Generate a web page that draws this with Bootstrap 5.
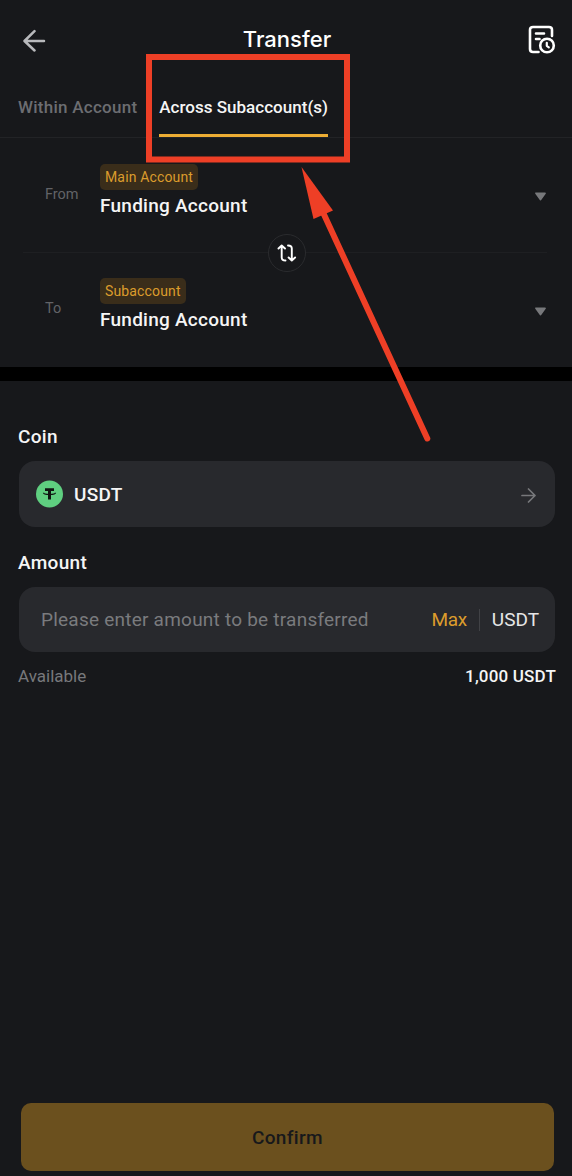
<!DOCTYPE html>
<html lang="en" data-bs-theme="dark">
<head>
<meta charset="utf-8">
<meta name="viewport" content="width=device-width, initial-scale=1">
<title>Transfer</title>
<link rel="stylesheet" href="https://cdn.jsdelivr.net/npm/bootstrap@5.3.0/dist/css/bootstrap.min.css">
<style>
  body { background: #17181b; color: #f5f5f5; font-family: Roboto, "Noto Sans", sans-serif; line-height: 1; }
  .screen { height: 1176px; }
  .screen span, .screen button, .screen h1, .screen label { white-space: nowrap; }
  svg { display: block; flex: none; }
  .top-bar { height: 80px; padding: 0 16px 0 22px; }
  .top-title { font: 500 22px/30px Inter, sans-serif; letter-spacing: 0; padding: 0 4px 2px 0; }
  .tab-bar { height: 58px; border-bottom: 1px solid #222326; padding-left: 18px; gap: 22px; }
  .tab-item { font-size: 17px; font-weight: 500; line-height: 54px; color: #6c6d71; height: 57px; letter-spacing: .26px; }
  .tab-item.active { color: #f5f5f5; border-bottom: 3px solid #edad34; letter-spacing: .02px; }
  .route { height: 229px; padding: 0 25px 0 23px; }
  .leg { height: 114px; padding: 0 0 0 22px; }
  .leg-label { width: 55px; font-size: 14.5px; color: #626367; letter-spacing: 0; padding-top: 49px; line-height: 16px; }
  .leg-body { padding-top: 26px; }
  .leg-tag { display: table; height: 25px; line-height: 26px; padding: 0 5px; border-radius: 5px; background: #3a2d1a; color: #dc9c2c; font-size: 14px; letter-spacing: .15px; }
  .leg-name { display: block; font-size: 19px; font-weight: 500; line-height: 24px; margin-top: 4px; letter-spacing: .25px; }
  .leg-to .leg-body { padding-top: 25px; }
  .leg-to .leg-label { padding-top: 48px; }
  .caret { margin: 54px 0 0 auto; }
  .swap-row { height: 1px; background: #1e1f22; padding-left: 4px; }
  .swap-btn { width: 38px; height: 38px; border: 1px solid #2a2b2e; background: #17181b; flex: none; }
  .gap-band { height: 14px; background: #000; }
  .form-area { padding: 44px 16px 0 18px; }
  .field-label { font-size: 19px; font-weight: 500; line-height: 24px; letter-spacing: .3px; display: block; }
  .amount-label { margin-top: 24px; }
  .field-box { height: 66px; border-radius: 16px; background: #28292d; margin: 12px 1px 0; padding: 0 16px 0 17px; }
  .amount-box { height: 65px; }
  .coin-name { font-size: 19px; font-weight: 500; margin-left: 11px; letter-spacing: .3px; }
  .hint { font-size: 19px; color: #7a7b7e; padding-left: 5px; letter-spacing: .23px; }
  .max { font-size: 19px; color: #dc9c2c; letter-spacing: -.3px; }
  .divider { width: 1px; height: 22px; background: #414246; margin: 0 12px; }
  .unit { font-size: 19px; color: #e6e6e6; }
  .avail { font-size: 17px; line-height: 24px; margin-top: 12px; color: #77787c; }
  .avail-value { color: #f5f5f5; font-weight: 500; letter-spacing: .18px; }
  .confirm { height: 68px; margin: auto 18px 5px 21px; border-radius: 10px; border: 0; padding: 2px 0 0; font-size: 19px; font-weight: 500; letter-spacing: .35px; }
  .confirm:disabled { opacity: 1; background: #6b501e; color: #17181b; }
  .callout-layer { position: absolute; left: 0; top: 0; pointer-events: none; }
</style>
</head>
<body>
<main class="screen position-relative d-flex flex-column overflow-hidden">
  <header class="top-bar d-flex align-items-center justify-content-between">
    <svg width="28" height="24" viewBox="0 0 28 24" fill="none" stroke="#b8b9bc" stroke-width="2.5" stroke-linecap="round" stroke-linejoin="round"><path d="M12.500 3.200 2.500 13l10 9.500M3 13h19"/></svg>
    <h1 class="top-title m-0">Transfer</h1>
    <svg width="28" height="30" viewBox="0 0 28 30" fill="none" stroke="#fff" stroke-width="2.600" stroke-linecap="round" stroke-linejoin="round"><path d="M24 11V5q0-3-3-3H5Q2 2 2 5v19q0 3 3 3h5.500M8 8.500h8M8 14h3.500"/><circle cx="19" cy="20.500" r="6.800"/><path d="M18.800 17.800v3l2 1.500" stroke-width="2.200"/></svg>
  </header>

  <nav class="tab-bar d-flex">
    <span class="tab-item">Within Account</span>
    <span class="tab-item active">Across Subaccount(s)</span>
  </nav>

  <section class="route">
    <div class="leg d-flex">
      <span class="leg-label">From</span>
      <div class="leg-body"><span class="leg-tag">Main Account</span><span class="leg-name">Funding Account</span></div>
      <svg class="caret" width="13" height="9" viewBox="0 0 13 9"><path d="M2 1.300h9L6.500 7.500Z" fill="#77787b" stroke="#77787b" stroke-width="1.800" stroke-linejoin="round"/></svg>
    </div>
    <div class="swap-row d-flex align-items-center justify-content-center">
      <button class="swap-btn rounded-circle p-0 d-flex align-items-center justify-content-center" aria-label="Swap accounts">
        <svg width="20" height="18" viewBox="0 0 20 18" fill="none" stroke="#fff" stroke-width="1.900" stroke-linecap="round" stroke-linejoin="round"><path d="M1.500 4.500 4.700 1.500 8 4.500M4.700 2v11.500q0 3 3.800 3M11 1.500q3.800 0 3.800 3V16M11.600 13.500l3.200 3 3.300-3"/></svg>
      </button>
    </div>
    <div class="leg leg-to d-flex">
      <span class="leg-label">To</span>
      <div class="leg-body"><span class="leg-tag">Subaccount</span><span class="leg-name">Funding Account</span></div>
      <svg class="caret" width="13" height="9" viewBox="0 0 13 9"><path d="M2 1.300h9L6.500 7.500Z" fill="#77787b" stroke="#77787b" stroke-width="1.800" stroke-linejoin="round"/></svg>
    </div>
  </section>
  <div class="gap-band"></div>

  <section class="form-area">
    <span class="field-label">Coin</span>
    <div class="field-box d-flex align-items-center">
      <svg width="27" height="28" viewBox="0 0 27 28"><circle cx="13.500" cy="14" r="13.500" fill="#5fcf80"/><path d="M9 8.200h9v2.700h-3v8.600h-3v-8.600H9Z" fill="#101512"/><path d="M7.500 12.700c0 2.300 12 2.300 12 0" fill="none" stroke="#101512" stroke-width="1.200"/></svg>
      <span class="coin-name">USDT</span>
      <svg class="ms-auto" width="18" height="17" viewBox="0 0 18 17" fill="none" stroke="#77787b" stroke-width="1.700" stroke-linecap="round" stroke-linejoin="round"><path d="M1 9.500h13M7.500 3 14 9.500 7.500 16"/></svg>
    </div>
    <label class="field-label amount-label">Amount</label>
    <div class="field-box amount-box d-flex align-items-center">
      <span class="hint me-auto">Please enter amount to be transferred</span>
      <span class="max">Max</span><div class="divider"></div><span class="unit">USDT</span>
    </div>
    <div class="avail d-flex justify-content-between"><span>Available</span><span class="avail-value">1,000 USDT</span></div>
  </section>

  <button class="btn confirm" disabled>Confirm</button>

  <svg class="callout-layer" width="572" height="460" viewBox="0 0 572 460" fill="none" stroke="#ee3f26" stroke-width="6"><rect x="149" y="57" width="198" height="102.500"/><path d="M427.300 438.500 321 208" stroke-linecap="round"/><path d="M301.500 167l31.500 43.500-19.500 8.500Z" fill="#ee3f26" stroke="none"/></svg>
</main>
<script src="https://cdn.jsdelivr.net/npm/bootstrap@5.3.0/dist/js/bootstrap.bundle.min.js"></script>
</body>
</html>
